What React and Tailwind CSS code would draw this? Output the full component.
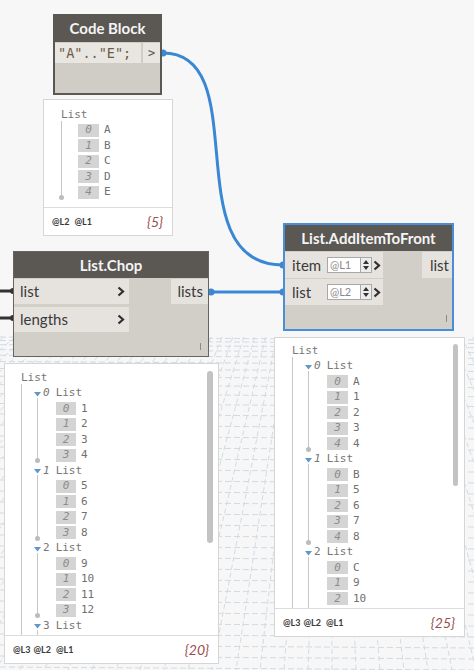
import React from "react";

const ui = "font-['Lato','Liberation_Sans',sans-serif]";
const mono = "font-['DejaVu_Sans_Mono','Liberation_Mono',monospace]";

// perspective grid of the 3D background
const GridBackground = () => {
  const hLines = [];
  for (let y = 337, s = 3.5; y < 680; y += s, s = Math.min(s + 0.7, 11)) hLines.push(y);
  const vp = { x: 330, y: 60 };
  const vLines = [];
  for (let bx = -700; bx <= 1300; bx += 24) {
    const k = (337 - vp.y) / (670 - vp.y);
    vLines.push({ x1: vp.x + (bx - vp.x) * k, x2: bx });
  }
  return (
    <svg className="absolute inset-0" width="474" height="670">
      {hLines.map((y, i) => (
        <line key={"h" + i} x1="0" y1={y} x2="474" y2={y + 3} stroke="#d0dbe4" strokeWidth="1" strokeDasharray="6 3" />
      ))}
      {vLines.map((l, i) => (
        <line key={"v" + i} x1={l.x1} y1="337" x2={l.x2} y2="670" stroke="#d2dce5" strokeWidth="1" strokeDasharray="5 3" />
      ))}
    </svg>
  );
};

const Wires = () => (
  <svg className="absolute inset-0" width="474" height="670">
    <path d="M163 53 C 256 53, 174 265, 283 265" fill="none" stroke="#3a87d4" strokeWidth="3" />
    <path d="M211 292 L283 292" fill="none" stroke="#3a87d4" strokeWidth="3" />
    <path d="M0 291 L13 291 M0 318 L13 318" fill="none" stroke="#333" strokeWidth="3" />
    <circle cx="163" cy="53" r="3.5" fill="#3a87d4" />
    <circle cx="211" cy="292" r="3.5" fill="#3a87d4" />
    <circle cx="283" cy="265" r="3.5" fill="#3a87d4" />
    <circle cx="283" cy="292" r="3.5" fill="#3a87d4" />
    <circle cx="13" cy="291" r="3" fill="#333" />
    <circle cx="13" cy="318" r="3" fill="#333" />
  </svg>
);

const Chevron = () => (
  <svg width="8" height="11" viewBox="0 0 8 11">
    <path d="M1.5 1.5 L6 5.5 L1.5 9.5" fill="none" stroke="#2f2f2f" strokeWidth="2.2" />
  </svg>
);

const Tri = () => (
  <svg width="7" height="5" viewBox="0 0 7 5" className="mt-[2px]">
    <path d="M0 0 L7 0 L3.5 4.5 Z" fill="#5f97c9" />
  </svg>
);

const Item = ({ i, v, pad, boxW }) => (
  <div className={`flex items-center h-[15.5px] ${pad}`}>
    <span className={`${boxW} h-[13px] bg-[#d4d4d4] text-[#8c8c8c] italic flex items-center justify-center`}>{i}</span>
    <span className="ml-[5px] text-[#707070]">{v}</span>
  </div>
);

// open = list runs past the bottom of the preview, so no end dot
const SubList = ({ idx, items, boxW, open }) => (
  <div className="relative">
    <div className="flex items-center h-[15.5px] pl-[13px] text-[#777]">
      <Tri />
      <span className={`ml-[2px] ${idx < 2 ? "italic" : ""}`}>{idx}</span>
      <span className="ml-[6px]">List</span>
    </div>
    <div className={`absolute left-[16px] top-[12px] w-px bg-[#c6c6c6] ${open ? "-bottom-[40px]" : "bottom-[2px]"}`} />
    {!open && <div className="absolute left-[14px] bottom-0 w-[5px] h-[5px] rounded-full bg-[#bcbcbc]" />}
    {items.map((v, i) => (
      <Item key={i} i={i} v={v} pad="pl-[35px]" boxW={boxW} />
    ))}
  </div>
);

const Preview = ({ className, levels, count, children, scroll, pad = "pl-[17px]" }) => (
  <div className={`absolute bg-white border border-[#d6d6d6] flex flex-col ${className}`}>
    <div className={`relative flex-1 overflow-hidden ${pad} ${mono} text-[11px]`}>
      {children}
      {scroll}
    </div>
    <div className={`h-[28px] border-t border-[#dcdcdc] flex items-center justify-between pl-[8px] pr-[9px] ${ui}`}>
      <div className="flex gap-[3px] text-[9px] font-bold text-[#3a3a3a]">
        {levels.map((l, i) => (
          <span key={i} className={i === levels.length - 1 ? "ml-[2px]" : ""}>{l}</span>
        ))}
      </div>
      <span className="italic text-[14px] text-[#9a4d4d]">{count}</span>
    </div>
  </div>
);

const TopList = ({ children, dot }) => (
  <div className="relative">
    <div className="h-[15.5px] flex items-center text-[#777]">List</div>
    <div className={`absolute left-0 top-[14px] w-px bg-[#c6c6c6] ${dot ? "bottom-[3px]" : "-bottom-[60px]"}`} />
    {dot && <div className="absolute -left-[2px] bottom-0 w-[5px] h-[5px] rounded-full bg-[#bcbcbc]" />}
    {children}
  </div>
);

export default function App() {
  // only the rows that fit in each preview are listed
  const left = [
    [1, 2, 3, 4],
    [5, 6, 7, 8],
    [9, 10, 11, 12],
    [],
  ];
  const right = [
    ["A", 1, 2, 3, 4],
    ["B", 5, 6, 7, 8],
    ["C", 9, 10],
  ];

  return (
    <div className={`relative w-[474px] h-[670px] overflow-hidden bg-[#f7f7f7] ${ui}`}>
      <GridBackground />
      <Wires />

      {/* Code Block */}
      <div className="absolute left-[53px] top-[14px] w-[109px] h-[81px] flex flex-col bg-[#d0ccc6] border-2 border-t-0 border-[#5b5753]">
        <div className="h-[28px] bg-[#5b5753] text-[#f4f4f4] font-bold text-[15px] flex items-center justify-center">
          Code Block
        </div>
        <div className="flex gap-[2px] h-[20px] mt-px">
          <div className={`flex-1 bg-[#e9e6e2] flex items-center pl-[3px] ${mono} text-[13.5px] text-[#6b5c4c]`}>"A".."E";</div>
          <div className={`w-[17px] bg-[#e9e6e2] flex items-center justify-center ${mono} text-[12px] text-[#555]`}>&gt;</div>
        </div>
      </div>

      <Preview className="left-[43px] top-[99px] w-[130px] h-[137px] pt-[7px]" levels={["@L2", "@L1"]} count="{5}">
        <TopList dot>
          {["A", "B", "C", "D", "E"].map((v, i) => (
            <Item key={i} i={i} v={v} pad="pl-[17px]" boxW="w-[21px]" />
          ))}
        </TopList>
      </Preview>

      {/* List.Chop */}
      <div className="absolute left-[13px] top-[251px] w-[196px] h-[106px] flex flex-col bg-[#d2cec8] border border-[#67635f]">
        <div className="h-[26px] bg-[#5b5753] text-[#f4f4f4] font-bold text-[15px] flex items-center justify-center">
          List.Chop
        </div>
        <div className="flex flex-1 text-[15px] text-[#3a3a3a]">
          <div className="w-[115px] flex flex-col gap-[3px] pt-px">
            <div className="h-[25px] bg-[#e6e3df] flex items-center pl-[6px] pr-[4px]">
              <span className="flex-1">list</span>
              <Chevron />
            </div>
            <div className="h-[25px] bg-[#e6e3df] flex items-center pl-[6px] pr-[4px]">
              <span className="flex-1">lengths</span>
              <Chevron />
            </div>
          </div>
          <div className="ml-auto w-[37px] pt-px">
            <div className="h-[25px] bg-[#e6e3df] flex items-center justify-end pr-[5px]">lists</div>
          </div>
        </div>
        <div className="absolute right-[7px] bottom-[6px] w-px h-[7px] bg-[#8a8a8a]" />
      </div>

      <Preview
        className="left-[4px] top-[363px] w-[215px] h-[301px] pt-[6px]"
        pad="pl-[16px]"
        levels={["@L3", "@L2", "@L1"]}
        count="{20}"
        scroll={<div className="absolute right-[5px] top-px w-[6px] h-[172px] rounded-[3px] bg-[#c3c3c3]" />}
      >
        <TopList>
          {left.map((items, i) => (
            <SubList key={i} idx={i} items={items} boxW="w-[20px]" open={i === left.length - 1} />
          ))}
        </TopList>
      </Preview>

      {/* List.AddItemToFront */}
      <div className="absolute left-[283px] top-[223px] w-[171px] h-[108px] flex flex-col bg-[#d2cec8] border-2 border-[#4a8fd6]">
        <div className="h-[26px] bg-[#5b5753] text-[#f4f4f4] font-bold text-[15px] flex items-center justify-center">
          List.AddItemToFront
        </div>
        <div className="flex flex-1 text-[15px] text-[#3a3a3a]">
          <div className="w-[98px] flex flex-col gap-[1px] pt-px">
            {["item", "list"].map((label, i) => (
              <div key={label} className="h-[26px] bg-[#e6e3df] flex items-center pl-[7px] pr-[2px]">
                <span className="w-[35px]">{label}</span>
                <div className="w-[34px] h-[16px] bg-white border border-[#a8a8a8] flex items-center pl-[2px] text-[11px] text-[#8a8a8a]">
                  @L{i + 1}
                </div>
                <div className="w-[11px] h-[16px] border border-l-0 border-[#a8a8a8] bg-[#ececec] flex flex-col items-center justify-center gap-[2px]">
                  <svg width="6" height="4" viewBox="0 0 6 4"><path d="M0 4 L3 0 L6 4 Z" fill="#333" /></svg>
                  <svg width="6" height="4" viewBox="0 0 6 4"><path d="M0 0 L6 0 L3 4 Z" fill="#333" /></svg>
                </div>
                <span className="ml-[1px]"><Chevron /></span>
              </div>
            ))}
          </div>
          <div className="ml-auto w-[30px] pt-px">
            <div className="h-[26px] bg-[#e6e3df] flex items-center justify-end pr-[3px]">list</div>
          </div>
        </div>
        <div className="absolute right-[5px] bottom-[7px] w-px h-[7px] bg-[#8a8a8a]" />
      </div>

      <Preview
        className="left-[274px] top-[337px] w-[191px] h-[300px] pt-[5px]"
        levels={["@L3", "@L2", "@L1"]}
        count="{25}"
        scroll={<div className="absolute right-[6px] top-px w-[5px] h-[142px] rounded-[3px] bg-[#c3c3c3]" />}
      >
        <TopList>
          {right.map((items, i) => (
            <SubList key={i} idx={i} items={items} boxW="w-[21px]" open={i === right.length - 1} />
          ))}
        </TopList>
      </Preview>
    </div>
  );
}
